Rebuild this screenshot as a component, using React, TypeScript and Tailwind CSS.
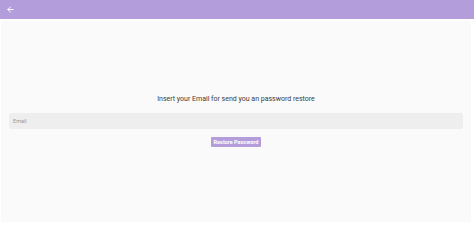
import { ArrowLeft } from "lucide-react";

const App = () => {
  return (
    <div className="h-[225px] w-[474px] bg-white font-['Roboto',sans-serif]">
      {/* Header */}
      <header className="flex h-[19px] items-center bg-[#b39ddb] pl-[6px]">
        <ArrowLeft size={9} strokeWidth={2.5} className="text-white" />
      </header>

      {/* Body */}
      <div className="ml-[1px] mr-[3px] mt-[2px] flex h-[201px] flex-col items-center justify-center bg-[#fafafa] px-2 pb-[2px]">
        <p className="text-[7px] text-[#3a3a3a]">Insert your Email for send you an password restore</p>
        <input
          placeholder="Email"
          className="mt-[8px] h-[16px] w-full rounded-[3px] bg-[#eeeeee] px-[4px] text-[5.5px] text-[#555] outline-none placeholder:text-[#999]"
        />
        <button className="mt-[8px] h-[10px] rounded-[1px] bg-[#b39ddb] px-[3px] text-[5.5px] font-bold text-white">
          Restore Password
        </button>
      </div>
    </div>
  );
};

export default App;
